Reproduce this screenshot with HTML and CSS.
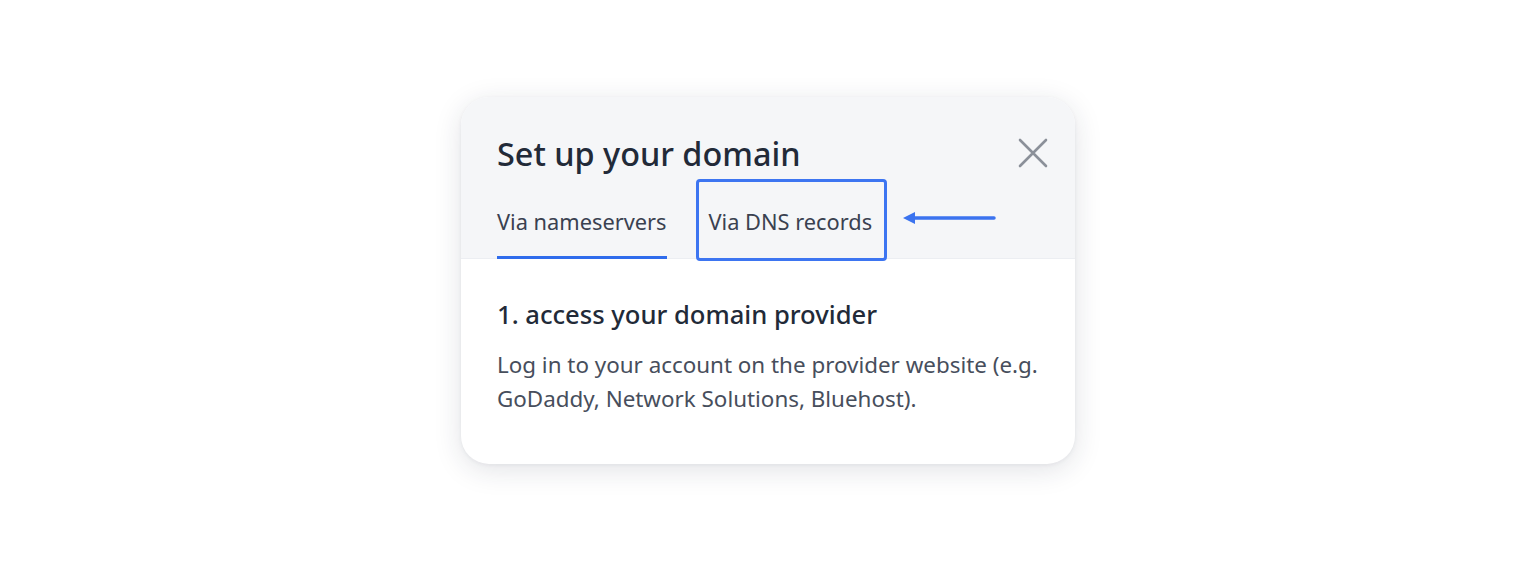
FILE: index.html
```html
<!DOCTYPE html>
<html lang="en">
<head>
<meta charset="utf-8">
<title>Set up your domain</title>
<link rel="stylesheet" href="styles.css">
</head>
<body>
<main class="stage">
  <section class="card">
    <header class="card-head">
      <div class="title-row">
        <h1 class="title">Set up your domain</h1>
        <button class="close" aria-label="Close">
          <svg width="32" height="32" viewBox="0 0 32 32"><path d="M3 3 L29 29 M29 3 L3 29" stroke="#8b9099" stroke-width="2.6" stroke-linecap="round" fill="none"/></svg>
        </button>
      </div>
      <nav class="tabs">
        <div class="tab tab-active">Via nameservers</div>
        <div class="tab tab-marked">Via DNS records</div>
        <svg class="arrow" width="94" height="16" viewBox="0 0 94 16"><path d="M10 8 H92" stroke="#3b73ef" stroke-width="3.5" stroke-linecap="round"/><path d="M1 8 L13 2 L13 14 Z" fill="#3b73ef"/></svg>
      </nav>
    </header>
    <div class="card-body">
      <h2 class="step">1. access your domain provider</h2>
      <p class="desc">Log in to your account on the provider website (e.g. GoDaddy, Network Solutions, Bluehost).</p>
    </div>
  </section>
</main>
</body>
</html>
```
FILE: styles.css
```css
* { box-sizing: border-box; }
html, body { margin: 0; padding: 0; }
body {
  background: #ffffff;
  font-family: "Noto Sans", "Open Sans", sans-serif;
  color: #1f2633;
}
.stage {
  height: 561px;
  display: flex;
  align-items: center;
  justify-content: center;
}
.card {
  width: 614px;
  height: 367px;
  border-radius: 28px;
  background: #ffffff;
  overflow: hidden;
  box-shadow: 0 6px 28px rgba(30, 40, 60, 0.13), 0 1px 4px rgba(30, 40, 60, 0.06);
  display: flex;
  flex-direction: column;
}
.card-head {
  background: #f5f6f8;
  padding: 36px 36px 0 36px;
  height: 162px;
  border-bottom: 1px solid #eceef2;
}
.title-row {
  display: flex;
  align-items: center;
  justify-content: space-between;
  height: 40px;
}
.title {
  margin: 0;
  font-size: 32.4px;
  font-weight: 500;
  line-height: 40px;
  color: #222a38;
}
.close {
  border: 0;
  background: none;
  padding: 0;
  margin-right: -10px;
  width: 32px;
  height: 32px;
  display: flex;
}
.tabs {
  display: flex;
  align-items: flex-start;
  margin-top: 6px;
}
.tab {
  font-size: 21.8px;
  line-height: 30px;
  color: #3a4150;
  white-space: nowrap;
}
.tab-active {
  padding: 28px 0 19px 0;
  border-bottom: 3px solid #2f6cec;
}
.tab-marked {
  margin-left: 29px;
  height: 82px;
  padding: 25px 12px 0 10px;
  border: 3px solid #3d75f1;
  border-radius: 4px;
}
.arrow {
  margin-left: 15px;
  margin-top: 31px;
}
.card-body {
  padding: 40px 36px 0 36px;
}
.step {
  margin: 0;
  font-size: 25.6px;
  font-weight: 500;
  line-height: 32px;
  color: #222a38;
}
.desc {
  margin: 17px 0 0 0;
  font-size: 22.4px;
  line-height: 34px;
  color: #474e5c;
}
```
